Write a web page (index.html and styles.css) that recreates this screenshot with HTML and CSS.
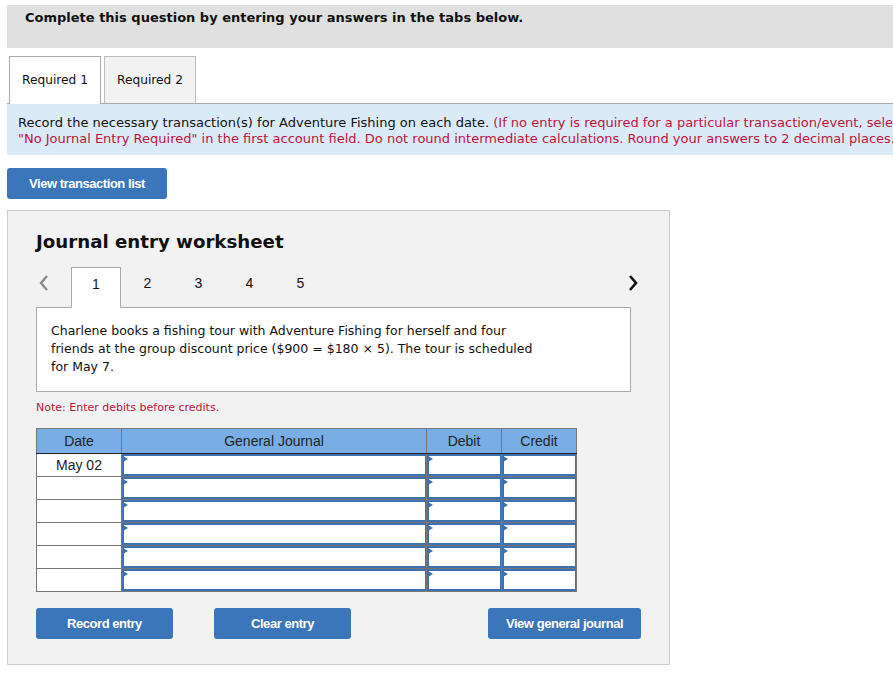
FILE: index.html
```html
<!DOCTYPE html>
<html lang="en">

<head>
    <meta charset="UTF-8" />
    <title>Journal entry worksheet</title>
    <link rel="stylesheet" href="styles.css">
</head>

<body>

    <!-- question header -->
    <div class="prompt">Complete this question by entering your answers in the tabs below.</div>

    <div class="tabs">
        <div class="tab active">Required 1</div>
        <div class="tab">Required 2</div>
    </div>

    <div class="instructions">
        Record the necessary transaction(s) for Adventure Fishing on each date.
        <span class="warn">(If no entry is required for a particular transaction/event, select<br>
            "No Journal Entry Required" in the first account field. Do not round intermediate calculations. Round your answers to 2 decimal places.)</span>
    </div>

    <button class="btn list-btn">View transaction list</button>

    <!-- worksheet -->
    <div class="worksheet">
        <h2 class="ws-title">Journal entry worksheet</h2>

        <div class="steps">
            <span class="arrow prev">
                <svg width="12" height="18" viewBox="0 0 12 18"><path d="M9 2 L3 9 L9 16" fill="none" stroke="#8a8a8a" stroke-width="2.4"/></svg>
            </span>
            <div class="step current">1</div>
            <div class="step">2</div>
            <div class="step">3</div>
            <div class="step">4</div>
            <div class="step">5</div>
            <span class="arrow next">
                <svg width="12" height="18" viewBox="0 0 12 18"><path d="M3 2 L9 9 L3 16" fill="none" stroke="#111" stroke-width="2.6"/></svg>
            </span>
        </div>

        <div class="desc">
            Charlene books a fishing tour with Adventure Fishing for herself and four<br>
            friends at the group discount price ($900 = $180 &times; 5). The tour is scheduled<br>
            for May 7.
        </div>

        <div class="note">Note: Enter debits before credits.</div>

        <table class="journal">
            <colgroup>
                <col class="c-date">
                <col class="c-acct">
                <col class="c-debit">
                <col class="c-credit">
            </colgroup>
            <thead>
                <tr>
                    <th>Date</th>
                    <th>General Journal</th>
                    <th>Debit</th>
                    <th>Credit</th>
                </tr>
            </thead>
            <tbody id="rows"></tbody>
        </table>

        <div class="actions">
            <button class="btn act">Record entry</button>
            <button class="btn act">Clear entry</button>
            <button class="btn act wide">View general journal</button>
        </div>
    </div>

    <script>
        const rows = document.getElementById('rows');
        const dates = ['May 02', '', '', '', '', ''];

        dates.forEach(d => {
            const tr = document.createElement('tr');
            tr.innerHTML =
                '<td class="date">' + d + '</td>' +
                '<td class="cell"><div class="field"></div></td>' +
                '<td class="cell"><div class="field"></div></td>' +
                '<td class="cell"><div class="field"></div></td>';
            rows.appendChild(tr);
        });
    </script>

</body>

</html>
```

FILE: styles.css
```css
html,
body {
    margin: 0;
    padding: 0;
    overflow: hidden;
}

body {
    padding: 5px 0 0 7px;
    font-family: "DejaVu Sans", Verdana, sans-serif;
    font-size: 13px;
    color: #111;
    background: white;
}

.prompt {
    width: 1000px;
    height: 43px;
    box-sizing: border-box;
    padding: 5px 18px;
    background: #e0e0e0;
    font-weight: bold;
}

/* tabs */
.tabs {
    display: flex;
    gap: 3px;
    margin-top: 8px;
    padding-left: 2px;
    width: 1000px;
    border-bottom: 1px solid #a9a9a9;
}

.tab {
    width: 92px;
    height: 47px;
    box-sizing: border-box;
    display: flex;
    align-items: center;
    justify-content: center;
    border: 1px solid #bdbdbd;
    border-bottom: none;
    background: #f2f2f2;
    font-size: 12.2px;
    padding-bottom: 1px;
}

.tab.active {
    background: white;
    border-color: #a9a9a9;
    margin-bottom: -1px;
    height: 48px;
    padding-bottom: 2px;
}

.instructions {
    width: 1000px;
    height: 51px;
    box-sizing: border-box;
    padding: 11px 11px 9px;
    background: #dbeaf7;
    line-height: 16px;
    white-space: nowrap;
    overflow: hidden;
}

.instructions .warn {
    color: #c0143c;
}

/* buttons */
.btn {
    display: block;
    border: none;
    border-radius: 3px;
    background: #3a76b9;
    color: white;
    font-family: "Liberation Sans", Arial, sans-serif;
    font-weight: bold;
    font-size: 13px;
    letter-spacing: -0.45px;
    height: 31px;
    padding: 0;
    cursor: pointer;
}

.list-btn {
    width: 160px;
    margin-top: 13px;
}

/* worksheet panel */
.worksheet {
    width: 663px;
    height: 455px;
    box-sizing: border-box;
    margin-top: 11px;
    padding: 0 28px;
    background: #f2f2f2;
    border: 1px solid #cbcbcb;
}

.ws-title {
    margin: 19px 0 0;
    font-size: 18.2px;
    line-height: 24px;
    font-weight: bold;
}

.steps {
    display: flex;
    align-items: stretch;
    height: 40px;
    margin-top: 13px;
    position: relative;
    z-index: 2;
}

.arrow {
    display: flex;
    align-items: center;
    justify-content: center;
    width: 16px;
    padding-bottom: 9px;
}

.arrow.prev {
    margin-right: 19px;
}

.arrow.next {
    margin-left: auto;
    margin-right: 0;
}

.step {
    width: 51px;
    display: flex;
    align-items: center;
    justify-content: center;
    font-family: "Liberation Sans", Arial, sans-serif;
    font-size: 14px;
    padding-bottom: 9px;
    box-sizing: border-box;
}

.step.current {
    width: 50px;
    margin-right: 1px;
    background: white;
    border: 1px solid #a9a9a9;
    border-bottom: 1px solid white;
    margin-bottom: -1px;
    height: 41px;
    padding-bottom: 7px;
}

.desc {
    width: 595px;
    box-sizing: border-box;
    padding: 14px 14px 15px;
    background: white;
    border: 1px solid #a9a9a9;
    font-size: 12.5px;
    line-height: 18px;
    position: relative;
    z-index: 1;
}

.note {
    margin-top: 8px;
    font-size: 11px;
    line-height: 15px;
    color: #b8173a;
}

/* journal table */
.journal {
    margin-top: 13px;
    width: 540px;
    table-layout: fixed;
    border-collapse: collapse;
    font-family: "Liberation Sans", Arial, sans-serif;
    font-size: 14px;
    color: #222;
}

.c-date {
    width: 85px;
}

.c-acct {
    width: 305px;
}

.c-debit {
    width: 75px;
}

.c-credit {
    width: 75px;
}

.journal th {
    height: 24px;
    padding: 0;
    background: #79ade6;
    font-weight: normal;
    border: 1px solid #777;
    border-left-color: #222;
    border-bottom: 1px solid #222;
}

.journal th:first-child {
    border-left-color: #777;
}

.journal td {
    height: 22px;
    padding: 0;
    border: 1px solid #777;
}

.journal td.date {
    background: white;
    text-align: center;
}

.journal td.cell {
    vertical-align: top;
}

.field {
    height: 22px;
    box-sizing: border-box;
    background: white;
    border: 2px solid #3d71b2;
    border-right-width: 1px;
    position: relative;
}

.field::before {
    content: "";
    position: absolute;
    left: -1px;
    top: 0;
    border-left: 5px solid #3d71b2;
    border-top: 3px solid transparent;
    border-bottom: 3px solid transparent;
}

.actions {
    display: flex;
    margin-top: 16px;
}

.act {
    width: 137px;
}

.act + .act {
    margin-left: 41px;
}

.act.wide {
    width: 153px;
    margin-left: 137px;
}
```
